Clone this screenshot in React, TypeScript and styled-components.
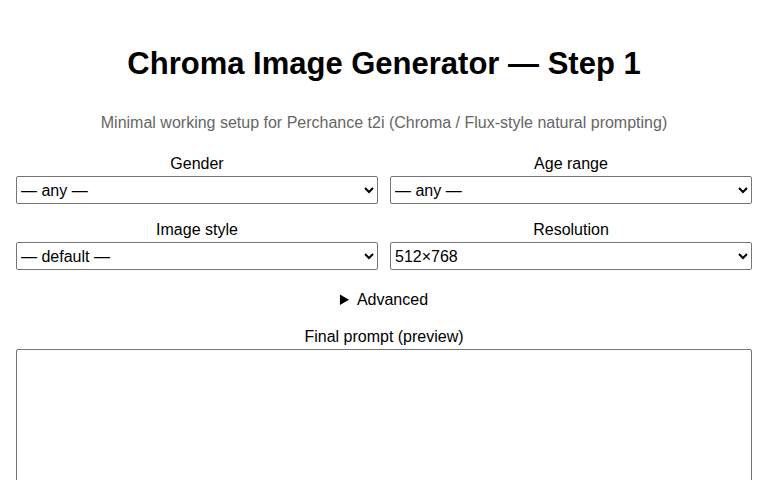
import styled, { createGlobalStyle } from "styled-components";

const GlobalStyle = createGlobalStyle`
  body {
    margin: 0;
    background: #fff;
    font-family: "Liberation Sans", Arial, sans-serif;
    color: #000;
  }
`;

export default () => {
  return (
    <>
      <GlobalStyle />
      <Page>
        <Title>Chroma Image Generator — Step 1</Title>
        <Subtitle>
          Minimal working setup for Perchance t2i (Chroma / Flux-style natural prompting)
        </Subtitle>
        <Grid>
          <Field>
            <Label htmlFor="gender">Gender</Label>
            <Select id="gender" defaultValue="">
              <option value="">— any —</option>
              <option value="female">female</option>
              <option value="male">male</option>
            </Select>
          </Field>
          <Field>
            <Label htmlFor="age">Age range</Label>
            <Select id="age" defaultValue="">
              <option value="">— any —</option>
              <option value="young">young adult</option>
              <option value="adult">adult</option>
            </Select>
          </Field>
          <Field>
            <Label htmlFor="style">Image style</Label>
            <Select id="style" defaultValue="">
              <option value="">— default —</option>
              <option value="photo">photo</option>
              <option value="anime">anime</option>
            </Select>
          </Field>
          <Field>
            <Label htmlFor="res">Resolution</Label>
            <Select id="res" defaultValue="512x768">
              <option value="512x768">512×768</option>
              <option value="768x512">768×512</option>
              <option value="768x768">768×768</option>
            </Select>
          </Field>
        </Grid>
        <Advanced>
          <summary>Advanced</summary>
        </Advanced>
        <Field>
          <Label htmlFor="prompt">Final prompt (preview)</Label>
          <Preview id="prompt" readOnly />
        </Field>
      </Page>
    </>
  );
};

const Page = styled.main`
  padding: 45px 16px 0;
  text-align: center;
`;

const Title = styled.h1`
  margin: 0;
  font-size: 31px;
  font-weight: bold;
  line-height: 37px;
`;

const Subtitle = styled.p`
  margin: 32px 0 23px;
  font-size: 16px;
  line-height: 18px;
  color: #666;
`;

const Grid = styled.div`
  display: grid;
  grid-template-columns: 1fr 1fr;
  column-gap: 12px;
  row-gap: 17px;
`;

const Field = styled.div`
  display: flex;
  flex-direction: column;
  align-items: stretch;
`;

const Label = styled.label`
  display: block;
  font-size: 16px;
  line-height: 18px;
  margin-bottom: 3px;
`;

const Select = styled.select`
  width: 100%;
  height: 28px;
  font-family: "Liberation Sans", Arial, sans-serif;
  font-size: 16px;
  color: #000;
  background: #fff;
  border: 1px solid #767676;
  border-radius: 2px;
  padding: 0;
`;

const Advanced = styled.details`
  margin: 21px 0 19px;
  font-size: 16px;
  line-height: 18px;

  summary {
    cursor: pointer;
  }
`;

const Preview = styled.textarea`
  width: 100%;
  height: 200px;
  box-sizing: border-box;
  border: 1px solid #767676;
  border-radius: 2px;
  font-family: "Liberation Mono", monospace;
  font-size: 14px;
  resize: vertical;
`;
